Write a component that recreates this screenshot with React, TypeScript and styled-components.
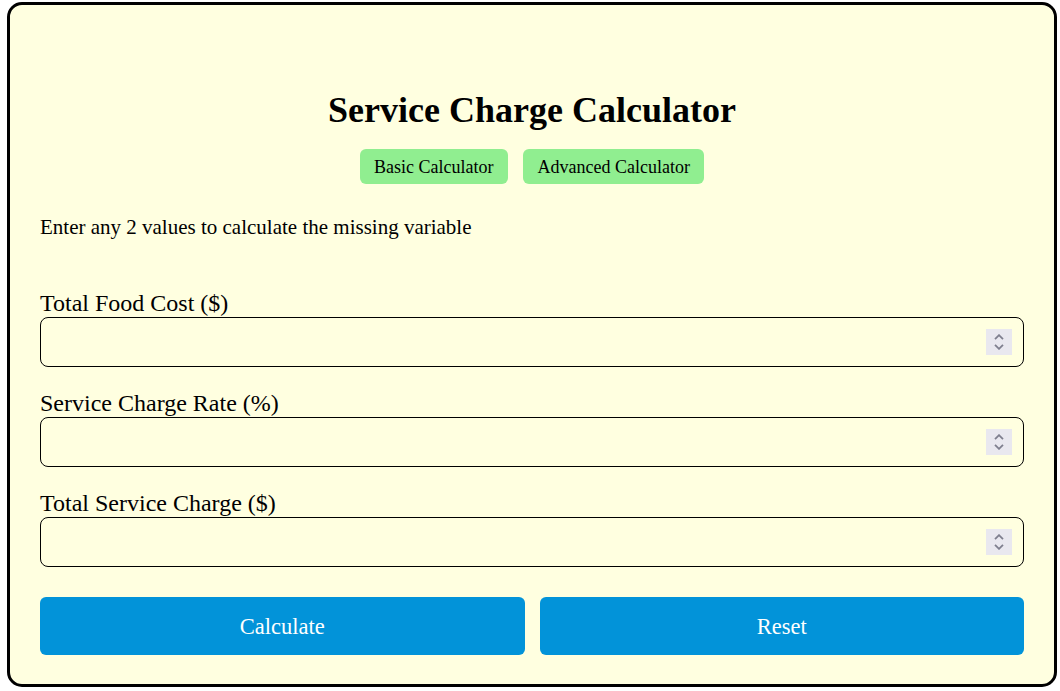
import React, { useState } from "react";
import styled, { createGlobalStyle } from "styled-components";

const GlobalStyle = createGlobalStyle`
  body {
    margin: 0;
    background: #ffffff;
    font-family: "Liberation Serif", "Times New Roman", serif;
  }
`

const Page = styled.div`
  padding: 2px 2px 0 7px;
`

const Card = styled.div`
  box-sizing: border-box;
  width: 1050px;
  height: 685px;
  border: 3px solid #000;
  border-radius: 15px;
  background-color: #ffffe0;
  padding: 84px 30px 30px;
`

const Title = styled.h1`
  margin: 0;
  font-size: 36px;
  line-height: 42px;
  font-weight: bold;
  text-align: center;
  color: #000;
`

const Tabs = styled.div`
  display: flex;
  justify-content: center;
  gap: 15px;
  margin-top: 18px;
`

const Tab = styled.button`
  height: 35px;
  padding: 1px 14.5px 0;
  border: none;
  border-radius: 6px;
  background-color: #90ee90;
  font-family: inherit;
  font-size: 18px;
  color: #000;
  cursor: pointer;
`

const Hint = styled.p`
  margin: 31px 0 0;
  font-size: 21px;
  line-height: 24px;
  color: #000;
`

const Fields = styled.div`
  margin-top: 50px;
`

const Field = styled.div`
  margin-bottom: 22px;
`

const Label = styled.label`
  display: block;
  font-size: 24px;
  line-height: 28px;
  color: #000;
`

const InputWrap = styled.div`
  position: relative;
`

const Input = styled.input`
  box-sizing: border-box;
  width: 100%;
  height: 50px;
  border: 1px solid #000;
  border-radius: 8px;
  background: transparent;
  padding: 0 44px 0 12px;
  font-family: inherit;
  font-size: 20px;
  outline: none;
  -moz-appearance: textfield;

  &::-webkit-outer-spin-button,
  &::-webkit-inner-spin-button {
    -webkit-appearance: none;
    margin: 0;
  }
`

const Spinner = styled.div`
  position: absolute;
  right: 12px;
  top: 12px;
  width: 26px;
  height: 26px;
  background-color: #e9e8ef;
  display: flex;
  flex-direction: column;
  align-items: center;
  justify-content: center;
  gap: 4px;
  pointer-events: none;
`

const Actions = styled.div`
  display: grid;
  grid-template-columns: 1fr 1fr;
  gap: 15px;
  margin-top: 30px;
`

const ActionButton = styled.button`
  height: 58px;
  border: none;
  border-radius: 6px;
  background-color: #0293d9;
  color: #fff;
  font-family: inherit;
  font-size: 22.5px;
  padding-top: 2px;
  cursor: pointer;
`

const fields = [
  { id: "food", label: "Total Food Cost ($)" },
  { id: "rate", label: "Service Charge Rate (%)" },
  { id: "charge", label: "Total Service Charge ($)" },
]

function SpinIcon() {
  return (
    <Spinner>
      <svg width="10" height="6" viewBox="0 0 10 6">
        <path d="M1 5.2 L5 1.2 L9 5.2" fill="none" stroke="#7f7f8e" strokeWidth="1.8" />
      </svg>
      <svg width="10" height="6" viewBox="0 0 10 6">
        <path d="M1 0.8 L5 4.8 L9 0.8" fill="none" stroke="#7f7f8e" strokeWidth="1.8" />
      </svg>
    </Spinner>
  )
}

function App() {
  const [values, setValues] = useState<Record<string, string>>({})

  const reset = () => setValues({})

  return (
    <Page>
      <GlobalStyle />
      <Card>
        <Title>Service Charge Calculator</Title>
        <Tabs>
          <Tab>Basic Calculator</Tab>
          <Tab>Advanced Calculator</Tab>
        </Tabs>
        <Hint>Enter any 2 values to calculate the missing variable</Hint>
        <Fields>
          {fields.map((f) => (
            <Field key={f.id}>
              <Label htmlFor={f.id}>{f.label}</Label>
              <InputWrap>
                <Input
                  id={f.id}
                  type="number"
                  value={values[f.id] ?? ""}
                  onChange={(e) => setValues({ ...values, [f.id]: e.target.value })}
                />
                <SpinIcon />
              </InputWrap>
            </Field>
          ))}
        </Fields>
        <Actions>
          <ActionButton>Calculate</ActionButton>
          <ActionButton onClick={reset}>Reset</ActionButton>
        </Actions>
      </Card>
    </Page>
  )
}

export default App
